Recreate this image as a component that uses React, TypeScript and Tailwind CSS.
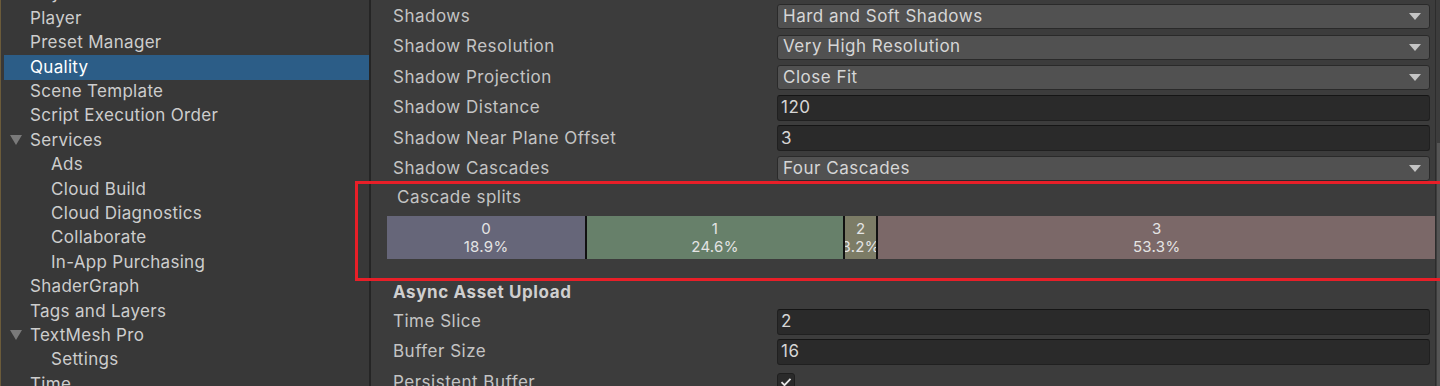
import React from 'react'

type NavItem = {
  label: string
  depth: 1 | 2
  expanded?: boolean
  selected?: boolean
}

const navItems: NavItem[] = [
  { label: 'Physics', depth: 1 },
  { label: 'Player', depth: 1 },
  { label: 'Preset Manager', depth: 1 },
  { label: 'Quality', depth: 1, selected: true },
  { label: 'Scene Template', depth: 1 },
  { label: 'Script Execution Order', depth: 1 },
  { label: 'Services', depth: 1, expanded: true },
  { label: 'Ads', depth: 2 },
  { label: 'Cloud Build', depth: 2 },
  { label: 'Cloud Diagnostics', depth: 2 },
  { label: 'Collaborate', depth: 2 },
  { label: 'In-App Purchasing', depth: 2 },
  { label: 'ShaderGraph', depth: 1 },
  { label: 'Tags and Layers', depth: 1 },
  { label: 'TextMesh Pro', depth: 1, expanded: true },
  { label: 'Settings', depth: 2 },
  { label: 'Time', depth: 1 },
]

const cascades = [
  { id: '0', pct: 18.9, color: 'bg-[#666679]' },
  { id: '1', pct: 24.6, color: 'bg-[#67806a]' },
  { id: '2', pct: 3.2, color: 'bg-[#7c7c66]' },
  { id: '3', pct: 53.3, color: 'bg-[#7b6868]' },
]

function Caret() {
  return (
    <svg width="12" height="10" viewBox="0 0 12 10">
      <path d="M0 0H12L6 10Z" fill="#7a7a7a" />
    </svg>
  )
}

function Dropdown({ value }: { value: string }) {
  return (
    <div className="flex h-[25px] items-center justify-between rounded-[3px] border border-[#2a2a2a] bg-[#515151] pl-[5px] pr-[8px] text-[#d6d6d6]">
      <span>{value}</span>
      <svg width="12" height="7" viewBox="0 0 12 7">
        <path d="M0 0H12L6 7Z" fill="#c4c4c4" />
      </svg>
    </div>
  )
}

function TextField({ value }: { value: string }) {
  return (
    <div className="flex h-[26px] items-center rounded-[3px] border border-[#202020] border-t-[#151515] bg-[#2a2a2a] pl-[3px] text-[#d6d6d6]">
      {value}
    </div>
  )
}

function Row({ label, children, bold = false, h = 'h-[30.4px]' }: { label: string; children?: React.ReactNode; bold?: boolean; h?: string }) {
  return (
    <div className={`flex ${h} shrink-0 items-center pl-[22px] pr-[5px]`}>
      <div className={`w-[384px] shrink-0 ${bold ? 'font-bold tracking-[0.6px] text-[#cfcfcf]' : 'text-[#c4c4c4]'}`}>{label}</div>
      <div className="flex-1">{children}</div>
    </div>
  )
}

export default function App() {
  return (
    <div className="relative flex h-[386px] w-[1440px] overflow-hidden bg-[#3c3c3c] font-[Inter,'Noto_Sans',sans-serif] text-[17px]">
      {/* Sidebar */}
      <div className="w-[369px] shrink-0 border-l border-[#6b5b3a] bg-[#383838] tracking-[0.3px]">
        <div className="-mt-[18px] flex flex-col pl-[3px]">
          {navItems.map(item => (
            <div
              key={item.label}
              className={`relative flex h-[24.4px] shrink-0 items-center ${item.selected ? 'bg-[#2c5d87] text-white' : 'text-[#cdcdcd]'} ${item.depth === 2 ? 'pl-[47px]' : 'pl-[26px]'}`}
            >
              {item.expanded && (
                <span className="absolute left-[6px] top-[7px]">
                  <Caret />
                </span>
              )}
              {item.label}
            </div>
          ))}
        </div>
      </div>
      <div className="w-[2px] shrink-0 bg-[#252525]" />

      {/* Inspector */}
      <div className="flex min-w-0 flex-1 tracking-[0.5px]">
        <div className="flex min-w-0 flex-1 flex-col pt-[1.5px]">
          <Row label="Shadows"><Dropdown value="Hard and Soft Shadows" /></Row>
          <Row label="Shadow Resolution"><Dropdown value="Very High Resolution" /></Row>
          <Row label="Shadow Projection"><Dropdown value="Close Fit" /></Row>
          <Row label="Shadow Distance"><TextField value="120" /></Row>
          <Row label="Shadow Near Plane Offset"><TextField value="3" /></Row>
          <Row label="Shadow Cascades"><Dropdown value="Four Cascades" /></Row>

          {/* Cascade splits */}
          <div className="flex h-[94.6px] shrink-0 flex-col pl-[16px] pt-[2px]">
            <div className="flex h-[24px] items-center pl-[10px] text-[#c4c4c4]">Cascade splits</div>
            <div className="mt-[6.5px] flex h-[43px]">
              {cascades.map((c, i) => (
                <div
                  key={c.id}
                  className={`flex min-w-0 flex-col items-center justify-center overflow-hidden text-[15px] leading-[18px] tracking-[0.3px] text-[#e4e4e4] ${c.color} ${i > 0 ? 'border-l-2 border-[#111111]' : ''}`}
                  style={{ width: `${c.pct}%` }}
                >
                  <span>{c.id}</span>
                  <span className="whitespace-nowrap">{c.pct}%</span>
                </div>
              ))}
            </div>
          </div>

          <Row label="Async Asset Upload" bold h="h-[28px]" />
          <Row label="Time Slice"><TextField value="2" /></Row>
          <Row label="Buffer Size"><TextField value="16" /></Row>
          <Row label="Persistent Buffer">
            <div className="flex h-[18px] w-[18px] items-center justify-center rounded-[3px] border border-[#1f1f1f] bg-[#2a2a2a]">
              <svg width="12" height="10" viewBox="0 0 12 10">
                <path d="M1.5 5.2L4.5 8.2L10.5 1.8" fill="none" stroke="#e6e6e6" strokeWidth="1.8" />
              </svg>
            </div>
          </Row>
        </div>

        {/* Scrollbar */}
        <div className="flex w-[5px] shrink-0 flex-col border-l border-[#2c2c2c]">
          <div className="h-[143px]" />
          <div className="ml-[1px] flex-1 bg-[#555555]" />
        </div>
      </div>

      {/* Annotation */}
      <div className="pointer-events-none absolute left-[355px] top-[181px] h-[100px] w-[1100px] border-[3px] border-[#e81f28]" />
    </div>
  )
}
